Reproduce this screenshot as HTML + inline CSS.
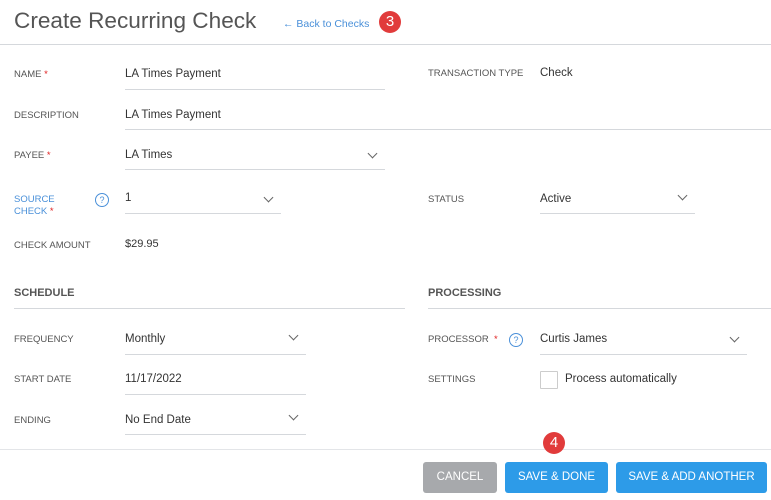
<!DOCTYPE html>
<html><head><style>
body{margin:0;width:771px;height:500px;background:#fff;font-family:"Liberation Sans",sans-serif;position:relative;overflow:hidden}
.a{position:absolute;white-space:nowrap}
.l{font-size:9.5px;color:#555;position:absolute;white-space:nowrap}
.v{font-size:11.5px;color:#333;position:absolute;white-space:nowrap}
.u{position:absolute;height:1px;background:#d5d8dc}
.r{color:#e02020}
.ch{position:absolute;width:6px;height:6px;border-right:1.3px solid #666;border-bottom:1.3px solid #666;transform:rotate(45deg)}
.q{position:absolute;width:12px;height:12px;border:1px solid #4a90d9;border-radius:50%;color:#4a90d9;font-size:9px;text-align:center;line-height:12px}
.b{position:absolute;top:462px;height:31px;color:#fff;font-size:11.5px;text-align:center;line-height:31px;border-radius:3px}
.badge{position:absolute;width:22px;height:22px;border-radius:50%;background:#e13b3b;color:#fff;font-size:15px;text-align:center;line-height:22px}
</style></head><body>
<div class="a" style="left:14px;top:8px;font-size:22.6px;color:#555">Create Recurring Check</div>
<div class="a" style="left:283px;top:18px;font-size:10.5px;color:#4a90d9">← Back to Checks</div>
<div class="badge" style="left:379px;top:11px">3</div>
<div class="u" style="left:0;top:44px;width:771px"></div>

<div class="l" style="left:14px;top:69px">NAME <span class="r">*</span></div>
<div class="v" style="left:125px;top:68px">LA Times Payment</div>
<div class="u" style="left:125px;top:89px;width:260px"></div>
<div class="l" style="left:428px;top:68px">TRANSACTION TYPE</div>
<div class="v" style="left:540px;top:67px">Check</div>

<div class="l" style="left:14px;top:110px">DESCRIPTION</div>
<div class="v" style="left:125px;top:109px">LA Times Payment</div>
<div class="u" style="left:125px;top:129px;width:646px"></div>

<div class="l" style="left:14px;top:150px">PAYEE <span class="r">*</span></div>
<div class="v" style="left:125px;top:149px">LA Times</div>
<div class="ch" style="left:369px;top:150px"></div>
<div class="u" style="left:125px;top:169px;width:260px"></div>

<div class="l" style="left:14px;top:194px;color:#4a90d9;line-height:12px">SOURCE<br>CHECK <span class="r">*</span></div>
<div class="q" style="left:95px;top:193px">?</div>
<div class="v" style="left:125px;top:192px">1</div>
<div class="ch" style="left:265px;top:194px"></div>
<div class="u" style="left:125px;top:213px;width:156px"></div>
<div class="l" style="left:428px;top:194px">STATUS</div>
<div class="v" style="left:540px;top:193px">Active</div>
<div class="ch" style="left:679px;top:192px"></div>
<div class="u" style="left:540px;top:213px;width:155px"></div>

<div class="l" style="left:14px;top:240px">CHECK AMOUNT</div>
<div class="v" style="left:125px;top:238px;font-size:11px">$29.95</div>

<div class="a" style="left:14px;top:287px;font-size:11px;color:#555;font-weight:bold">SCHEDULE</div>
<div class="u" style="left:14px;top:308px;width:391px"></div>
<div class="a" style="left:428px;top:287px;font-size:11px;color:#555;font-weight:bold">PROCESSING</div>
<div class="u" style="left:428px;top:308px;width:343px"></div>

<div class="l" style="left:14px;top:334px">FREQUENCY</div>
<div class="v" style="left:125px;top:333px">Monthly</div>
<div class="ch" style="left:290px;top:332px"></div>
<div class="u" style="left:125px;top:354px;width:181px"></div>
<div class="l" style="left:428px;top:334px">PROCESSOR <span class="r">&nbsp;*</span></div>
<div class="q" style="left:509px;top:333px">?</div>
<div class="v" style="left:540px;top:333px">Curtis James</div>
<div class="ch" style="left:731px;top:334px"></div>
<div class="u" style="left:540px;top:354px;width:207px"></div>

<div class="l" style="left:14px;top:374px">START DATE</div>
<div class="v" style="left:125px;top:373px">11/17/2022</div>
<div class="u" style="left:125px;top:394px;width:181px"></div>
<div class="l" style="left:428px;top:374px">SETTINGS</div>
<div class="a" style="left:540px;top:371px;width:16px;height:16px;border:1px solid #ccc;border-radius:1px"></div>
<div class="v" style="left:565px;top:373px">Process automatically</div>

<div class="l" style="left:14px;top:415px">ENDING</div>
<div class="v" style="left:125px;top:414px">No End Date</div>
<div class="ch" style="left:290px;top:412px"></div>
<div class="u" style="left:125px;top:434px;width:181px"></div>

<div class="u" style="left:0;top:449px;width:771px;background:#e3e5e8"></div>
<div class="badge" style="left:543px;top:432px">4</div>
<div class="b" style="left:423px;width:74px;background:#a7a9ac">CANCEL</div>
<div class="b" style="left:505px;width:103px;background:#2d9be8">SAVE &amp; DONE</div>
<div class="b" style="left:616px;width:151px;background:#2d9be8">SAVE &amp; ADD ANOTHER</div>
</body></html>
